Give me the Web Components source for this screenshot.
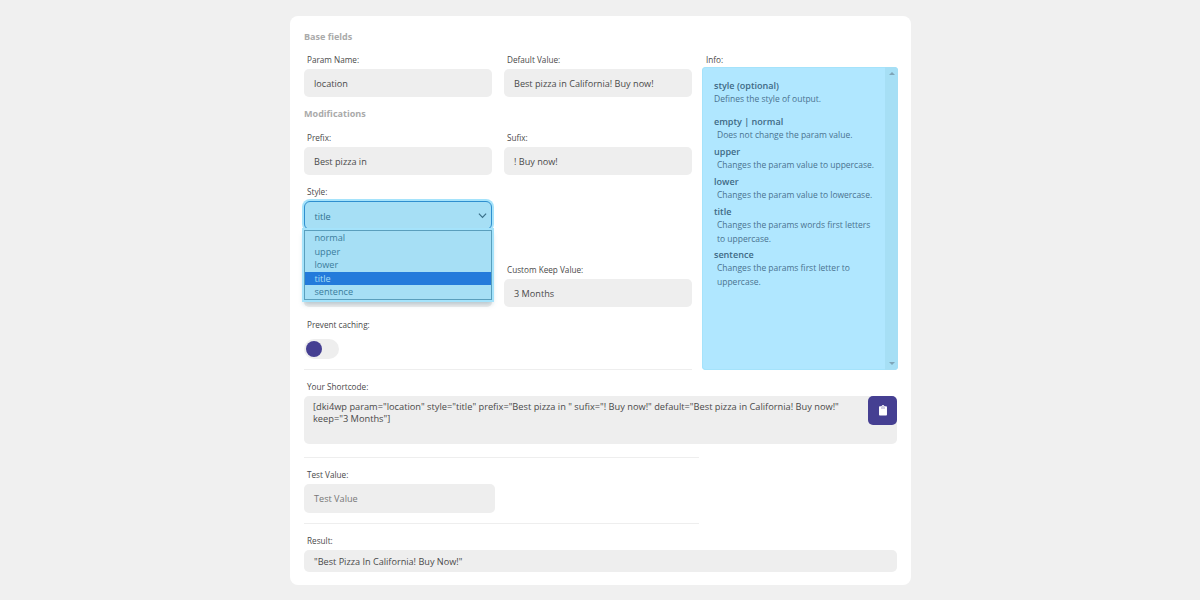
<!DOCTYPE html>
<html>
<head>
<meta charset="utf-8">
<title>Shortcode builder</title>
<style>
  html, body { margin: 0; background: #f0f0f0; }
  body {
    font: 9.15px/14px "Open Sans", "Noto Sans", sans-serif;
    color: #4a4a4a;
  }
</style>
</head>
<body>
<dk-card>
  <dk-builder>
    <dk-heading>Base fields</dk-heading>
    <dk-row>
      <dk-field label="Param Name:" value="location"></dk-field>
      <dk-field label="Default Value:" value="Best pizza in California! Buy now!"></dk-field>
    </dk-row>
    <dk-heading class="sub">Modifications</dk-heading>
    <dk-row>
      <dk-field label="Prefix:" value="Best pizza in"></dk-field>
      <dk-field label="Sufix:" value="! Buy now!"></dk-field>
    </dk-row>
    <dk-row style="margin-top:9px">
      <dk-select label="Style:" value="title" options="normal,upper,lower,title,sentence"></dk-select>
    </dk-row>
    <dk-row style="margin-top:32px">
      <dk-field class="hidden-label" label="" value=""></dk-field>
      <dk-field label="Custom Keep Value:" value="3 Months"></dk-field>
    </dk-row>
    <dk-toggle label="Prevent caching:"></dk-toggle>
    <dk-info label="Info:" slot="info">
      <h4>style (optional)</h4>
      <p class="lead">Defines the style of output.</p>
      <h4>empty | normal</h4>
      <p>Does not change the param value.</p>
      <h4>upper</h4>
      <p>Changes the param value to uppercase.</p>
      <h4>lower</h4>
      <p>Changes the param value to lowercase.</p>
      <h4>title</h4>
      <p class="tight">Changes the params words first letters to uppercase.</p>
      <h4>sentence</h4>
      <p class="tight">Changes the params first letter to uppercase.</p>
    </dk-info>
  </dk-builder>
  <dk-shortcode label="Your Shortcode:">[dki4wp param="location" style="title" prefix="Best pizza in " sufix="! Buy now!" default="Best pizza in California! Buy now!" keep="3 Months"]</dk-shortcode>
  <dk-rule></dk-rule>
  <dk-field class="test" label="Test Value:" placeholder="Test Value"></dk-field>
  <dk-rule class="second"></dk-rule>
  <dk-result label="Result:">"Best Pizza In California! Buy Now!"</dk-result>
</dk-card>

<script>
function define(name, css, html, setup) {
  customElements.define(name, class extends HTMLElement {
    constructor() {
      super();
      this.attachShadow({ mode: 'open' });
    }

    connectedCallback() {
      if(this.shadowRoot.firstChild) return;
      let attr = (key) => this.getAttribute(key) || '';
      this.shadowRoot.innerHTML = `<style>${css}</style>${typeof html === 'function' ? html(attr) : html}`;
      if(setup) setup(this, attr);
    }
  });
}

const LABEL = `
  .label { display: block; height: 14px; line-height: 16px; margin: 0 0 3px 3px; color: #4a4a4a; font-size: 8.2px; }
`;

define('dk-card', `
  :host {
    display: block;
    box-sizing: border-box;
    width: 621px;
    height: 569px;
    margin: 16px 0 0 290px;
    padding: 14px 13px 0 14px;
    background: #fff;
    border-radius: 8px;
  }
`, `<slot></slot>`);

define('dk-builder', `
  :host {
    display: grid;
    grid-template-columns: 388px 196px;
    column-gap: 10px;
    height: 340px;
  }
  .left { display: block; border-bottom: 1px solid #eee; height: 339px; }
  .right { display: flex; padding-top: 22px; }
`, `
  <div class="left"><slot></slot></div>
  <div class="right"><slot name="info"></slot></div>
`);

define('dk-heading', `
  :host {
    display: block;
    height: 14px;
    line-height: 14px;
    font-weight: 700;
    font-size: 9.05px;
    color: #aaa;
    margin: 0 0 8px;
  }
  :host(.sub) { margin: 10px 0 9px; }
`, `<slot></slot>`);

define('dk-row', `
  :host {
    display: grid;
    grid-template-columns: 188px 188px;
    column-gap: 12px;
  }
`, `<slot></slot>`);

define('dk-field', LABEL + `
  :host { display: block; }
  :host(.test) { width: 191px; }
  .box {
    box-sizing: border-box;
    height: 28px;
    padding: 0 10px;
    line-height: 30px;
    background: #eee;
    border-radius: 5px;
    white-space: nowrap;
  }
  :host(.test) .box { height: 29px; }
  .ph { color: #777; }
`, (attr) => `
  <span class="label">${attr('label')}</span>
  <div class="box ${attr('placeholder') ? 'ph' : ''}">${attr('value') || attr('placeholder')}</div>
`);

define('dk-select', LABEL + `
  :host { display: block; position: relative; z-index: 2; }
  .control {
    box-sizing: border-box;
    height: 29px;
    padding: 0 4px 0 9.5px;
    display: flex;
    align-items: center;
    justify-content: space-between;
    background: #a6dff5;
    border: 1.5px solid #2f8fcf;
    border-radius: 6px;
    box-shadow: 0 0 0 2px #a5e3fb;
    color: #2f6f8f;
  }
  .control span { padding-top: 2px; }
  svg { width: 9px; height: 9px; }
  .menu {
    position: absolute;
    left: 0;
    right: 0;
    top: 46px;
    box-sizing: border-box;
    height: 70px;
    background: #a6dff5;
    border: 1px solid #5a9fbd;
    box-shadow: 0 0 0 2px #a5e3fb, 0 4px 5px rgba(60, 110, 130, .35);
    line-height: 13.6px;
    color: #3a7c9c;
  }
  .menu div { padding-left: 9.5px; height: 13.6px; }
  .menu .on { background: #247bdb; color: #a6dff5; }
`, (attr) => `
  <span class="label">${attr('label')}</span>
  <div class="control">
    <span>${attr('value')}</span>
    <svg viewBox="0 0 10 10" fill="none" stroke="#3a6f88" stroke-width="1.3"><path d="M1 3l4 4 4-4"/></svg>
  </div>
  <div class="menu">
    ${attr('options').split(',').map((o) => `<div class="${o === attr('value') ? 'on' : ''}">${o}</div>`).join('')}
  </div>
`);

define('dk-toggle', LABEL + `
  :host { display: block; margin-top: 10px; }
  .track {
    width: 35px;
    height: 20px;
    margin-top: 8px;
    border-radius: 10px;
    background: #eee;
    display: flex;
    align-items: center;
    padding-left: 2px;
    box-sizing: border-box;
  }
  .knob { width: 16px; height: 16px; border-radius: 50%; background: #453f92; }
`, (attr) => `
  <span class="label">${attr('label')}</span>
  <div class="track"><div class="knob"></div></div>
`);

define('dk-info', LABEL + `
  :host { display: flex; flex-direction: column; flex: 1; }
  .label { margin: 0 0 1px 4px; }
  .panel {
    flex: 1;
    display: flex;
    background: #b0e7ff;
    border-radius: 4px;
    box-shadow: inset 0 0 0 1px #a5e3fb;
    color: #4a7390;
    overflow: hidden;
  }
  .body { flex: 1; padding: 11px 10px 10px 12px; font-size: 8.5px; }
  .bar {
    width: 13px;
    background: #a6dff5;
    display: flex;
    flex-direction: column;
    justify-content: space-between;
    align-items: center;
    padding: 5px 0;
  }
  .bar i { width: 0; height: 0; border: 3px solid transparent; }
  .bar i.up { border-bottom-color: #7fa5b8; border-top-width: 0; }
  .bar i.down { border-top-color: #7fa5b8; border-bottom-width: 0; }
  ::slotted(h4) { margin: 0 0 -1px; font-size: 9.05px; line-height: 15px; font-weight: 600; color: #3e6a85; }
  ::slotted(p) { margin: 0 0 2px 3px; font-size: 8.5px; line-height: 14px; }
  ::slotted(p.lead) { margin: 0 0 8px; }
  ::slotted(p.tight) { margin: -1px 0 1px 3px; }
`, (attr) => `
  <span class="label">${attr('label')}</span>
  <div class="panel">
    <div class="body"><slot></slot></div>
    <div class="bar"><i class="up"></i><i class="down"></i></div>
  </div>
`);

define('dk-shortcode', LABEL + `
  :host { display: block; position: relative; margin: 9px 1px 0 0; }
  .box {
    box-sizing: border-box;
    height: 48px;
    padding: 5px 30px 0 9px;
    background: #eee;
    border-radius: 5px;
    font-size: 9.25px;
    line-height: 11.5px;
  }
  button {
    position: absolute;
    right: 0;
    top: 17px;
    width: 29px;
    height: 29px;
    padding: 0;
    border: 0;
    border-radius: 5px;
    background: #453f92;
    display: flex;
    align-items: center;
    justify-content: center;
  }
  svg { width: 8px; height: 10.6px; fill: #fff; }
`, (attr) => `
  <span class="label">${attr('label')}</span>
  <div class="box"><slot></slot></div>
  <button><svg viewBox="0 0 384 512"><path d="M384 112v352c0 26.51-21.49 48-48 48H48c-26.51 0-48-21.49-48-48V112c0-26.51 21.49-48 48-48h80c0-35.29 28.71-64 64-64s64 28.71 64 64h80c26.51 0 48 21.49 48 48zM192 40c-13.255 0-24 10.745-24 24s10.745 24 24 24 24-10.745 24-24-10.745-24-24-24m96 114v-20a6 6 0 0 0-6-6H102a6 6 0 0 0-6 6v20a6 6 0 0 0 6 6h180a6 6 0 0 0 6-6z"/></svg></button>
`);

define('dk-rule', `
  :host { display: block; width: 395px; height: 1px; background: #eee; margin: 13px 0 9px; }
  :host(.second) { margin: 10px 0 9px; }
`, ``);

define('dk-result', LABEL + `
  :host { display: block; margin-right: 1px; }
  .box {
    box-sizing: border-box;
    height: 22px;
    padding: 0 10px;
    line-height: 23px;
    background: #eee;
    border-radius: 5px;
  }
`, (attr) => `
  <span class="label">${attr('label')}</span>
  <div class="box"><slot></slot></div>
`);
</script>
</body>
</html>
